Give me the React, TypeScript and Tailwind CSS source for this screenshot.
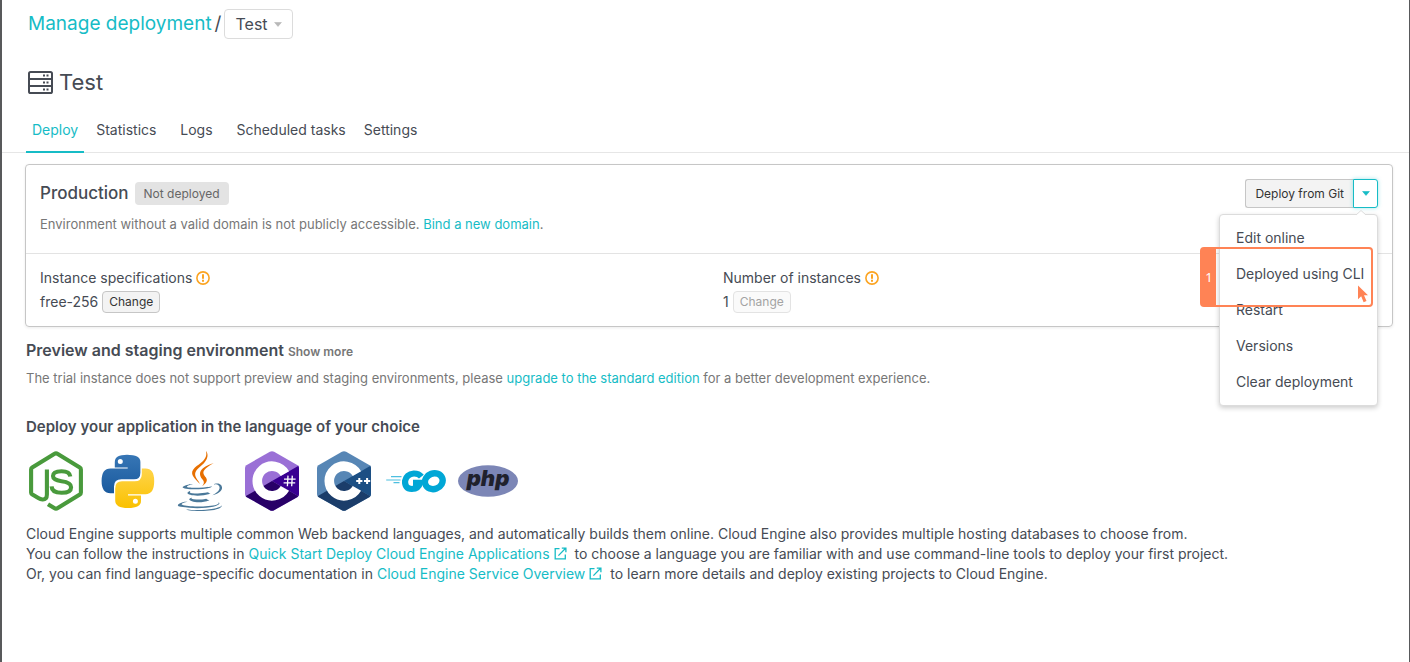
import React from "react";

const tabs = ["Deploy", "Statistics", "Logs", "Scheduled tasks", "Settings"];

function Caret({ className }: { className: string }) {
  return (
    <svg viewBox="0 0 8 5" className={className} aria-hidden="true">
      <path d="M0.6 0.5h6.8L4 4.4z" fill="currentColor" stroke="currentColor" strokeWidth="0.6" strokeLinejoin="round" />
    </svg>
  );
}

function ServerIcon() {
  return (
    <svg viewBox="0 0 26 24" className="h-6 w-[26px]" fill="none" stroke="#464b54" strokeWidth="2" aria-hidden="true">
      <rect x="2" y="1" width="23" height="21" rx="1.6" />
      <path d="M2 8h23M2 15h23" />
      <path d="M16 4.5h2M19.5 4.5h2M16 11.5h2M19.5 11.5h2M16 18.5h2M19.5 18.5h2" strokeWidth="1.8" />
    </svg>
  );
}

function WarnIcon() {
  return (
    <svg viewBox="0 0 14 14" className="h-3.5 w-3.5 text-[#fba422]" fill="none" stroke="currentColor" aria-hidden="true">
      <circle cx="7" cy="7" r="6.1" strokeWidth="1.6" />
      <path d="M7 3.2v4.6M7 8.8v1.9" strokeWidth="2" />
    </svg>
  );
}

function ExternalIcon() {
  return (
    <svg viewBox="0 0 13 13" className="ml-1 mr-1 inline-block h-[13px] w-[13px] align-[-1px]" fill="none" stroke="currentColor" strokeWidth="1.3" aria-hidden="true">
      <path d="M5.5 1.7H1.2v10.1h10.1V7.4" />
      <path d="M4.4 8.6l7.2-7.3M7.8 1.1h4.1v4.1" />
    </svg>
  );
}

function NodeLogo() {
  return (
    <svg viewBox="0 0 60 60" className="h-[60px] w-[60px]" fill="none" stroke="#499a3c" strokeWidth="4.1" strokeLinejoin="round" role="img" aria-label="Node.js">
      <path d="M20.9 18.5v25q0 5.3-4.4 5-2.1-.2-4.2-1.5L6 43.2Q5.1 42.6 5.1 41.5V18.5Q5.1 17.2 6.2 16.5L28.2 3Q30 1.9 31.8 3L53.8 16.5Q54.9 17.2 54.9 18.5V41.5Q54.9 42.8 53.8 43.5L31.8 57Q30 58.1 28.2 57L22 53.2" />
      <path d="M44.3 25.5q-.6-5.3-8.8-5.3-8.5 0-8.5 4.9 0 4 8.5 5.1 9.6 1.1 9.6 6 0 5.6-9.5 5.6-9.8 0-10-6.4" />
    </svg>
  );
}

function PythonLogo() {
  return (
    <svg viewBox="0 0 60 60" className="h-[60px] w-[60px]" role="img" aria-label="Python">
      <defs>
        <linearGradient id="pyBlue" x1="0" y1="0" x2="0" y2="1">
          <stop offset="0" stopColor="#3776b5" />
          <stop offset="1" stopColor="#1a5a9e" />
        </linearGradient>
        <linearGradient id="pyYellow" x1="0" y1="0" x2="0" y2="1">
          <stop offset="0" stopColor="#ffd44a" />
          <stop offset="1" stopColor="#fac100" />
        </linearGradient>
      </defs>
      <path fill="url(#pyBlue)" fillRule="evenodd" d="M16.8 17V11Q16.8 3.7 29 3.7Q42.4 3.7 42.4 11V21.7Q42.4 28.3 36 28.3H23.5Q16 28.3 16 35.5V42.3H12.5Q3.6 42.3 3.6 30Q3.6 17.6 12.5 17.6H29.7V16.4H16.8zM22.3 8a2.5 2.5 0 1 0 0 5a2.5 2.5 0 1 0 0-5z" />
      <path fill="url(#pyYellow)" fillRule="evenodd" d="M43.8 17.6H47.5Q56.2 17.6 56.2 30Q56.2 43.2 47.5 43.2H30V44.4H43V50Q43 57 30 57Q17.2 57 17.2 49.5V37.5Q17.2 30.3 24 30.3H36.5Q43.8 30.3 43.8 23.2zM37.4 47.7a2.5 2.5 0 1 0 0 5a2.5 2.5 0 1 0 0-5z" />
    </svg>
  );
}

function JavaLogo() {
  return (
    <svg viewBox="0 0 384 512" className="h-[60px] w-[60px]" role="img" aria-label="Java">
      <path fill="#e76f00" d="M192.34 280.8c-19-42.7-83.1-80.2 0-145.8C296 53.2 242.84 0 242.84 0c21.5 84.5-75.6 110.1-110.7 162.6-23.9 35.9 11.7 74.4 60.2 118.2zm114.6-176.2c.1 0-175.2 43.8-91.5 140.2 24.7 28.4-6.5 54-6.5 54s62.7-32.4 33.9-72.9c-26.9-37.8-47.5-56.6 64.1-121.3z" />
      <path fill="#4a7899" d="M277.74 312.9c9.8-6.7 23.4-12.5 23.4-12.5s-38.7 7-77.2 10.2c-47.1 3.9-97.7 4.7-123.1 1.3-60.1-8 33-30.1 33-30.1s-36.1-2.4-80.6 19c-52.5 25.4 130 37 224.5 12.1zm23.1 62.2a12.19 12.19 0 0 1-2 2.6c128.3-33.7 81.1-118.9 19.8-97.3a17.33 17.33 0 0 0-8.2 6.3 70.45 70.45 0 0 1 11-3c31-6.5 75.5 41.5-20.6 91.4zM348 437.4s14.5 11.9-15.9 21.2c-57.9 17.5-240.8 22.8-291.6.7-18.3-7.9 16-19 26.8-21.3 11.2-2.4 17.7-2 17.7-2-20.3-14.3-131.3 28.1-56.4 40.2C232.84 509.4 401 461.3 348 437.4zM124.44 396c-78.7 22 47.9 67.4 148.1 24.5a185.89 185.89 0 0 1-28.2-13.8c-44.7 8.5-65.4 9.1-106 4.5-33.5-3.8-13.9-15.2-13.9-15.2zm179.8 97.2c-78.7 14.8-175.8 13.1-233.3 3.6 0-.1 11.8 9.7 72.4 13.6 92.2 5.9 233.8-3.3 237.1-46.9 0 0-6.4 16.5-76.2 29.7zM260.64 353c-59.2 11.4-93.5 11.1-136.8 6.6-33.5-3.5-11.6-19.7-11.6-19.7-86.8 28.8 48.2 61.4 169.5 25.9a60.37 60.37 0 0 1-21.1-12.8z" />
    </svg>
  );
}

function HexLogo({ id, label, light, side, dark, children }: { id: string; label: string; light: string; side: string; dark: string; children: React.ReactNode }) {
  const hex = "M27.9 .8Q30 -.3 32.1 .8L55.6 14.2Q57 15.1 57 17V43Q57 45 55.6 45.9L32.1 59.2Q30 60.3 27.9 59.2L4.4 45.9Q3 45 3 43V17Q3 15.1 4.4 14.2z";
  return (
    <svg viewBox="0 0 60 60" className="h-[60px] w-[60px]" role="img" aria-label={label}>
      <clipPath id={id}>
        <path d={hex} />
      </clipPath>
      <g clipPath={`url(#${id})`}>
        <path d="M0 0h60v60H0z" fill={light} />
        <path d="M30 30L60 12.7V47.3z" fill={side} />
        <path d="M30 30L60 47.3V60H0V47.3z" fill={dark} />
      </g>
      <path d="M42.9 22.6A14.8 14.8 0 1 0 42.9 37.4" fill="none" stroke="#fff" strokeWidth="9.6" />
      {children}
    </svg>
  );
}

function GoLogo() {
  return (
    <svg viewBox="0 0 60 60" className="h-[60px] w-[60px]" fill="none" role="img" aria-label="Go">
      <path d="M5 25.6h10.5M.2 29h14.3M7.5 31.7h6" stroke="#4dbfe0" strokeWidth="1.2" />
      <path d="M35.4 25.6Q32.8 22.4 27.8 22.5Q20.4 23.2 19.1 29.8Q18.5 37.6 25.8 38Q32.6 37.8 34 31.8H27" stroke="#00a7d6" strokeWidth="6.2" />
      <ellipse cx="47.8" cy="30.2" rx="9" ry="7.8" stroke="#00a7d6" strokeWidth="6.4" transform="rotate(-20 47.8 30.2)" />
    </svg>
  );
}

function PhpLogo() {
  return (
    <svg viewBox="0 0 60 60" className="h-[60px] w-[60px]" role="img" aria-label="PHP">
      <ellipse cx="30" cy="30" rx="30" ry="15.7" fill="#7c86b6" />
      <text x="30" y="35" textAnchor="middle" fontFamily="Inter, sans-serif" fontSize="22" fontWeight="900" fontStyle="italic" fill="#20212d">
        php
      </text>
    </svg>
  );
}

const link = "text-[#16bcc6] hover:underline";
const menuItem = "flex h-9 w-full items-center whitespace-nowrap px-4";

export default function App() {
  return (
    <main className="min-h-screen border-l-2 border-r border-[#58595b] bg-white font-['Inter','Liberation_Sans',sans-serif] text-sm text-[#464b54]">
      <header className="px-6 pt-[9px]">
        <nav className="flex items-center text-[19px]" aria-label="Breadcrumb">
          <a href="#manage" className="ml-0.5 text-[#16bcc6]">Manage deployment</a>
          <span className="mx-[3px]">/</span>
          <button type="button" className="flex h-[30px] items-center gap-1.5 rounded border border-[#dcdcdc] px-2.5 text-base">
            Test
            <Caret className="h-[5px] w-2 text-[#b8b8b8]" />
          </button>
        </nav>
        <h1 className="mt-[26px] flex h-9 items-center gap-1.5 pl-px text-[22px]">
          <ServerIcon />
          Test
        </h1>
      </header>

      <nav className="mt-2 flex gap-1.5 border-b border-[#e6e6e6] px-6" aria-label="Sections">
        {tabs.map((tab, i) => (
          <a
            key={tab}
            href={`#${tab.toLowerCase().replace(" ", "-")}`}
            className={
              i === 0
                ? "-mb-px flex h-11 min-w-14 items-center justify-center border-b-2 border-[#16bcc6] px-1.5 text-[#16bcc6]"
                : "-mb-px flex h-11 min-w-14 items-center justify-center border-b-2 border-transparent px-1.5"
            }
          >
            {tab}
          </a>
        ))}
      </nav>

      <div className="pl-6 pr-4">
        <section className="-ml-px mt-[11px] rounded border border-[#c6c6c6] shadow-[0_1px_3px_rgba(0,0,0,0.08)]">
          <div className="flex items-start justify-between border-b border-[#e3e3e3] px-3.5 pb-[19px] pt-3.5">
            <div>
              <div className="flex h-[29px] items-center gap-1.5">
                <h2 className="text-[17px] font-medium">Production</h2>
                <span className="flex h-[23px] items-center rounded bg-[#e3e3e3] px-[9px] text-xs text-[#666]">Not deployed</span>
              </div>
              <p className="mt-1.5 text-[13px] leading-5 text-[#777]">
                Environment without a valid domain is not publicly accessible.{" "}
                <a href="#domain" className={link}>Bind a new domain</a>.
              </p>
            </div>
            <div className="relative flex">
              <button type="button" className="h-[29px] rounded-l-[3px] border border-r-0 border-[#c6c6c6] bg-[#f3f3f3] px-[9px] text-xs text-[#333]">
                Deploy from Git
              </button>
              <button type="button" aria-label="More deploy options" className="flex h-[29px] w-[25px] items-center justify-center rounded-r-[3px] border border-[#16bcc6] bg-white shadow-[0_0_4px_rgba(22,188,198,0.4)]">
                <Caret className="h-[5px] w-2 text-[#16bcc6]" />
              </button>
              <div className="absolute right-0 top-[35px] w-[159px] rounded border border-[#dcdcdc] bg-white py-[5px] shadow-[0_2px_5px_rgba(0,0,0,0.2)]">
                <svg viewBox="0 0 10 6" className="absolute -top-[5px] right-[11px] h-1.5 w-2.5" aria-hidden="true">
                  <path d="M0 5L5 .5L10 5V6H0z" fill="#fff" />
                  <path d="M0 5L5 .5L10 5" fill="none" stroke="#dcdcdc" />
                </svg>
                <ul>
                  <li><button type="button" className={menuItem}>Edit online</button></li>
                  <li className="relative">
                    <button type="button" className={menuItem}>Deployed using CLI</button>
                    <div className="pointer-events-none absolute -left-5 -top-[9px] flex h-[60px] w-[173px] rounded border-2 border-[#ff8355]">
                      <span className="flex w-3.5 items-center justify-center bg-[#ff8355] font-['Noto_Sans',sans-serif] text-[13px] text-white">1</span>
                      <svg viewBox="0 0 12 18" className="absolute bottom-0.5 right-0.5 h-[18px] w-3" aria-hidden="true">
                        <path d="M1 .5V14.2L4.2 11.3L6.6 17.2L9.5 16L7 10.3H11z" fill="#ff8355" />
                      </svg>
                    </div>
                  </li>
                  <li><button type="button" className={menuItem}>Restart</button></li>
                  <li><button type="button" className={menuItem}>Versions</button></li>
                  <li><button type="button" className={menuItem}>Clear deployment</button></li>
                </ul>
              </div>
            </div>
          </div>
          <div className="grid grid-cols-2 pb-3 pt-3 leading-6">
            <div className="px-3.5">
              <div className="flex items-center gap-1">Instance specifications <WarnIcon /></div>
              <div className="flex items-center gap-1">
                free-256
                <button type="button" className="flex h-[22px] items-center rounded-sm border border-[#c6c6c6] bg-[#f3f3f3] px-1.5 text-xs text-[#333]">Change</button>
              </div>
            </div>
            <div className="px-3.5">
              <div className="flex items-center gap-1">Number of instances <WarnIcon /></div>
              <div className="flex items-center gap-1">
                1
                <button type="button" disabled className="flex h-[22px] items-center rounded-sm border border-[#e3e3e3] bg-[#fafafa] px-1.5 text-xs text-[#a3a3a3]">Change</button>
              </div>
            </div>
          </div>
        </section>

        <h2 className="mt-[11px] text-base font-semibold leading-6">
          Preview and staging environment{" "}
          <button type="button" className="text-xs font-semibold text-[#777]">Show more</button>
        </h2>
        <p className="mt-1.5 text-[13px] leading-5 text-[#777]">
          The trial instance does not support preview and staging environments, please{" "}
          <a href="#upgrade" className={link}>upgrade to the standard edition</a> for a better development experience.
        </p>

        <h2 className="mt-[27px] text-[15px] font-semibold leading-6">Deploy your application in the language of your choice</h2>
        <div className="mt-3 flex gap-3">
          <NodeLogo />
          <PythonLogo />
          <JavaLogo />
          <HexLogo id="hexCs" label="C#" light="#9a70d6" side="#390091" dark="#280068">
            <path d="M46 24.6l-.6 10.6M50.3 24.6l-.6 10.6M42 28.2h11.6M41.6 31.9h11.6" stroke="#fff" strokeWidth="1.3" fill="none" />
          </HexLogo>
          <HexLogo id="hexCpp" label="C++" light="#5786b5" side="#1c4f84" dark="#1b3d6a">
            <path d="M42.2 30h6.2M45.3 26.9v6.2M50 30h6.2M53.1 26.9v6.2" stroke="#fff" strokeWidth="2" fill="none" />
          </HexLogo>
          <GoLogo />
          <PhpLogo />
        </div>
        <p className="mt-[13px] leading-5">
          Cloud Engine supports multiple common Web backend languages, and automatically builds them online. Cloud Engine also provides multiple hosting databases to choose from.
          <br />
          You can follow the instructions in{" "}
          <a href="#quick-start" className={link}>Quick Start Deploy Cloud Engine Applications<ExternalIcon /></a>{" "}
          to choose a language you are familiar with and use command-line tools to deploy your first project.
          <br />
          Or, you can find language-specific documentation in{" "}
          <a href="#overview" className={link}>Cloud Engine Service Overview<ExternalIcon /></a>{" "}
          to learn more details and deploy existing projects to Cloud Engine.
        </p>
      </div>
    </main>
  );
}
